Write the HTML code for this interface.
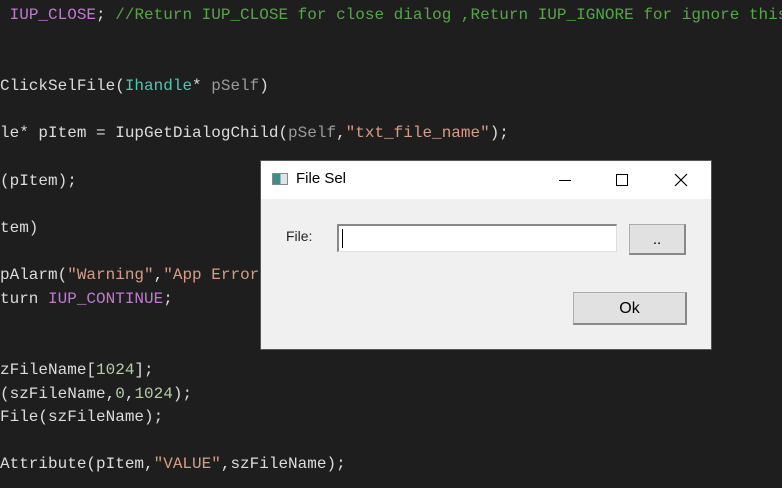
<!DOCTYPE html>
<html><head><style>
body{margin:0;width:782px;height:488px;background:#1e1e1e;overflow:hidden;position:relative;font-family:"Liberation Mono",monospace;}
.code{position:absolute;left:0;top:4px;font-size:16px;line-height:23.65px;color:#dcdcdc;white-space:pre;}
.p{color:#c07ad0}.g{color:#57a64a}.t{color:#4ec9b0}.gr{color:#9b9b9b}.s{color:#d69d85}.n{color:#b5cea8}
.dlg{position:absolute;left:261px;top:161px;width:450px;height:188px;background:#f0f0f0;font-family:"Liberation Sans",sans-serif;box-shadow:0 0 0 1px #555;}
.tb{height:38px;background:#fff;position:relative;}
.btn{position:absolute;background:#e1e1e1;border:1px solid #adadad;border-right:2px solid #888;border-bottom:2px solid #888;box-sizing:border-box;text-align:center;font-size:15px;color:#000;}
</style></head><body>
<div class="code"> <span class="p">IUP_CLOSE</span>; <span class="g">//Return IUP_CLOSE for close dialog ,Return IUP_IGNORE for ignore this</span>


ClickSelFile(<span class="t">Ihandle</span>* <span class="gr">pSelf</span>)

le* pItem = IupGetDialogChild(<span class="gr">pSelf</span>,<span class="s">"txt_file_name"</span>);

(pItem);

tem)

pAlarm(<span class="s">"Warning"</span>,<span class="s">"App Error"</span>
turn <span class="p">IUP_CONTINUE</span>;


zFileName[<span class="n">1024</span>];
(szFileName,<span class="n">0</span>,<span class="n">1024</span>);
File(szFileName);

Attribute(pItem,<span class="s">"VALUE"</span>,szFileName);</div>
<div class="dlg">
 <div class="tb">
  <div style="position:absolute;left:11px;top:12px;width:16px;height:12px;border:1px solid #888;background:linear-gradient(90deg,#3a8f8a 0 55%,#dfe6ea 55%);box-sizing:border-box"></div>
  <div style="position:absolute;left:35px;top:9px;font-size:15px;color:#000">File Sel</div>
  <div style="position:absolute;left:298px;top:19px;width:12px;height:1px;background:#000"></div>
  <div style="position:absolute;left:355px;top:13px;width:12px;height:12px;border:1px solid #000;box-sizing:border-box"></div>
  <svg style="position:absolute;left:413px;top:12px" width="14" height="14"><path d="M1 1L13 13M13 1L1 13" stroke="#000" stroke-width="1.2"/></svg>
 </div>
 <div style="position:absolute;left:25px;top:67px;font-size:14px;color:#222">File:</div>
 <div style="position:absolute;left:76px;top:63px;width:280px;height:28px;background:#fff;border-top:2px solid #888;border-left:2px solid #888;border-right:1px solid #ddd;border-bottom:1px solid #ddd;box-sizing:border-box"><div style="position:absolute;left:3px;top:3px;width:1px;height:19px;background:#000"></div></div>
 <div class="btn" style="left:368px;top:63px;width:57px;height:31px;line-height:30px">..</div>
 <div class="btn" style="left:312px;top:131px;width:114px;height:33px;line-height:31px;font-size:16px">Ok</div>
</div>
</body></html>
